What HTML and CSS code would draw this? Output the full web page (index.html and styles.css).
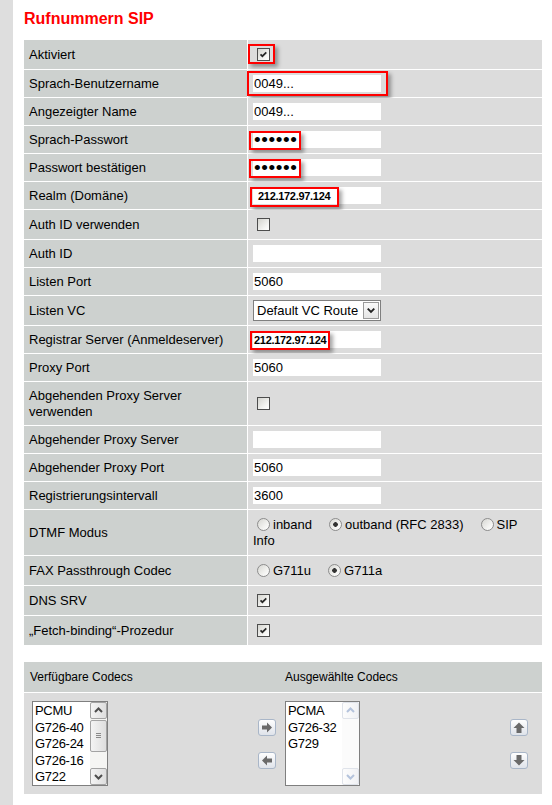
FILE: index.html
```html
<!DOCTYPE html>
<html lang="de">
<head>
  <meta charset="UTF-8">
  <meta name="viewport" content="width=device-width, initial-scale=1.0">
  <title>Rufnummern SIP</title>
  <link rel="stylesheet" href="styles.css">
</head>
<body>
  <div class="page">
    <div class="side"></div>
    <div class="main">
      <h1>Rufnummern SIP</h1>

      <table class="settings">
        <tr class="tall">
          <td class="label">Aktiviert</td>
          <td class="val">
            <span class="cb"><svg viewBox="0 0 11 11"><path d="M2.5 5.3 L4.4 7.2 L8.3 3.3"/></svg></span>
            <span class="mark mark-check"></span>
          </td>
        </tr>
        <tr>
          <td class="label">Sprach-Benutzername</td>
          <td class="val"><input class="txt" type="text" value="0049..."><span class="mark mark-user"></span></td>
        </tr>
        <tr>
          <td class="label">Angezeigter Name</td>
          <td class="val"><input class="txt" type="text" value="0049..."></td>
        </tr>
        <tr>
          <td class="label">Sprach-Passwort</td>
          <td class="val"><input class="txt pw" type="password" value="secret"><span class="mark mark-pass"></span></td>
        </tr>
        <tr>
          <td class="label">Passwort bestätigen</td>
          <td class="val"><input class="txt pw" type="password" value="secret"><span class="mark mark-pass"></span></td>
        </tr>
        <tr>
          <td class="label">Realm (Domäne)</td>
          <td class="val"><input class="txt ip realm" type="text" value="212.172.97.124"><span class="mark mark-realm"></span></td>
        </tr>
        <tr class="tall">
          <td class="label">Auth ID verwenden</td>
          <td class="val"><span class="cb"></span></td>
        </tr>
        <tr>
          <td class="label">Auth ID</td>
          <td class="val"><input class="txt" type="text" value=""></td>
        </tr>
        <tr>
          <td class="label">Listen Port</td>
          <td class="val"><input class="txt" type="text" value="5060"></td>
        </tr>
        <tr class="tall">
          <td class="label">Listen VC</td>
          <td class="val">
            <span class="select">
              <span class="select-text">Default VC Route</span>
              <span class="select-btn"><svg viewBox="0 0 14 16"><path d="M3.5 6 L7 9.5 L10.5 6"/></svg></span>
            </span>
          </td>
        </tr>
        <tr>
          <td class="label">Registrar Server (Anmeldeserver)</td>
          <td class="val"><input class="txt ip" type="text" value="212.172.97.124"><span class="mark mark-reg"></span></td>
        </tr>
        <tr>
          <td class="label">Proxy Port</td>
          <td class="val"><input class="txt" type="text" value="5060"></td>
        </tr>
        <tr class="double">
          <td class="label">Abgehenden Proxy Server verwenden</td>
          <td class="val"><span class="cb"></span></td>
        </tr>
        <tr>
          <td class="label">Abgehender Proxy Server</td>
          <td class="val"><input class="txt" type="text" value=""></td>
        </tr>
        <tr>
          <td class="label">Abgehender Proxy Port</td>
          <td class="val"><input class="txt" type="text" value="5060"></td>
        </tr>
        <tr>
          <td class="label">Registrierungsintervall</td>
          <td class="val"><input class="txt" type="text" value="3600"></td>
        </tr>
        <tr class="double wide">
          <td class="label">DTMF Modus</td>
          <td class="val radios"><span class="opt"><span class="rb"></span>inband</span><span class="opt"><span class="rb on"></span>outband (RFC 2833)</span><span class="opt"><span class="rb"></span>SIP</span> Info</td>
        </tr>
        <tr class="tall">
          <td class="label">FAX Passthrough Codec</td>
          <td class="val radios"><span class="opt"><span class="rb"></span>G711u</span><span class="opt"><span class="rb on"></span>G711a</span></td>
        </tr>
        <tr class="tall">
          <td class="label">DNS SRV</td>
          <td class="val"><span class="cb"><svg viewBox="0 0 11 11"><path d="M2.5 5.3 L4.4 7.2 L8.3 3.3"/></svg></span></td>
        </tr>
        <tr class="tall">
          <td class="label">„Fetch-binding“-Prozedur</td>
          <td class="val"><span class="cb"><svg viewBox="0 0 11 11"><path d="M2.5 5.3 L4.4 7.2 L8.3 3.3"/></svg></span></td>
        </tr>
      </table>

      <div class="codecs">
        <div class="codecs-head">
          <span class="col-a">Verfügbare Codecs</span>
          <span>Ausgewählte Codecs</span>
        </div>
        <div class="codecs-body">
          <div class="list list-a">
            <div class="list-items">
              <div>PCMU</div>
              <div>G726-40</div>
              <div>G726-24</div>
              <div>G726-16</div>
              <div>G722</div>
            </div>
            <div class="sb">
              <span class="sb-btn"><svg viewBox="0 0 15 15"><path d="M4 9 L7.5 5.5 L11 9"/></svg></span>
              <span class="sb-thumb"><svg viewBox="0 0 15 30"><path d="M5 12.5 H10 M5 14.5 H10 M5 16.5 H10"/></svg></span>
              <span class="sb-track"></span>
              <span class="sb-btn"><svg viewBox="0 0 15 15"><path d="M4 6 L7.5 9.5 L11 6"/></svg></span>
            </div>
          </div>

          <div class="movers">
            <span class="btn"><svg viewBox="0 0 16 15"><path d="M3 5.5 H8 V2.5 L13 7.5 L8 12.5 V9.5 H3 Z"/></svg></span>
            <span class="btn"><svg viewBox="0 0 16 15"><path d="M13 5.5 H8 V2.5 L3 7.5 L8 12.5 V9.5 H13 Z"/></svg></span>
          </div>

          <div class="list list-b">
            <div class="list-items">
              <div>PCMA</div>
              <div>G726-32</div>
              <div>G729</div>
            </div>
            <div class="sb off">
              <span class="sb-btn"><svg viewBox="0 0 15 15"><path d="M4 9 L7.5 5.5 L11 9"/></svg></span>
              <span class="sb-track"></span>
              <span class="sb-btn"><svg viewBox="0 0 15 15"><path d="M4 6 L7.5 9.5 L11 6"/></svg></span>
            </div>
          </div>

          <div class="movers">
            <span class="btn"><svg viewBox="0 0 16 15"><path d="M5.5 13 V8 H2.5 L8 2.5 L13.5 8 H10.5 V13 Z"/></svg></span>
            <span class="btn"><svg viewBox="0 0 16 15"><path d="M5.5 2 V7 H2.5 L8 12.5 L13.5 7 H10.5 V2 Z"/></svg></span>
          </div>
        </div>
      </div>
    </div>
  </div>
</body>
</html>
```

FILE: styles.css
```css
/* Reset */
* {
  box-sizing: border-box;
  margin: 0;
  padding: 0;
}

body {
  font-family: "Liberation Sans", Arial, sans-serif;
  font-size: 13px;
  color: #000;
  background-color: #fff;
}

.page {
  display: flex;
  min-height: 100vh;
}

/* grey strip on the left edge */
.side {
  flex: none;
  width: 13px;
  background-color: #dedede;
}

.main {
  margin-left: 11px;
  width: 518px;
}

h1 {
  height: 40px;
  padding-top: 10px;
  font-size: 16px;
  line-height: 18px;
  font-weight: bold;
  color: #f00;
}

/* Settings table */
.settings {
  width: 518px;
  border-collapse: separate;
  border-spacing: 0;
}

.settings td {
  height: 28px;
  border-bottom: 1px solid #fff;
  vertical-align: middle;
  line-height: 16px;
}

.settings tr.tall td {
  height: 30px;
}

.settings tr.double td {
  height: 44px;
}

.settings tr.wide td {
  height: 46px;
}

.label {
  width: 224px;
  padding: 0 14px 0 5px;
  background-color: #cdd1cf;
  border-right: 1px solid #fff;
}

.val {
  position: relative;
  padding: 0 10px 0 5px;
  background-color: #dcdcdc;
}

.txt {
  display: block;
  width: 128px;
  height: 17px;
  border: none;
  padding: 0 1px;
  background: #fff;
  font-family: "Liberation Sans", Arial, sans-serif;
  font-size: 13px;
  color: #000;
  outline: none;
}

.txt.pw {
  font-size: 19px;
  letter-spacing: 0.6px;
  line-height: 17px;
}

.txt.ip {
  font-size: 11px;
  font-weight: bold;
  letter-spacing: -0.3px;
}

.txt.realm {
  padding-left: 5px;
}

/* checkbox */
.cb {
  display: block;
  width: 13px;
  height: 13px;
  margin-left: 4px;
  border: 1px solid #4d4d4d;
  background: linear-gradient(135deg, #d4d4cf 0%, #f6f6f4 70%, #fff 100%);
}

.cb svg {
  display: block;
  width: 11px;
  height: 11px;
  fill: none;
  stroke: #262626;
  stroke-width: 1.7;
}

/* radio buttons */
.radios {
  line-height: 17px;
  padding-top: 1px;
}

.opt {
  white-space: nowrap;
}

.opt + .opt {
  margin-left: 13px;
}

.rb {
  display: inline-block;
  width: 13px;
  height: 13px;
  margin: 0 3px 0 4px;
  vertical-align: -2px;
  border: 1px solid #8c8c8c;
  border-radius: 50%;
  background: linear-gradient(135deg, #d6d6d2 0%, #f4f4f2 65%, #fff 100%);
}

.rb.on {
  background:
    radial-gradient(circle, #333 0, #333 2px, transparent 2.6px),
    linear-gradient(135deg, #d6d6d2 0%, #f4f4f2 65%, #fff 100%);
}

/* select box */
.select {
  display: flex;
  align-items: center;
  width: 128px;
  height: 21px;
  border: 1px solid #7f7f7f;
  background-color: #fff;
}

.select-text {
  flex: 1;
  padding-left: 3px;
  white-space: nowrap;
}

.select-btn {
  width: 16px;
  height: 17px;
  margin-right: 1px;
  border: 1px solid #9a9a9a;
  background: linear-gradient(#fafafa, #e4e4e4);
}

.select-btn svg {
  display: block;
  width: 14px;
  height: 15px;
  fill: none;
  stroke: #222;
  stroke-width: 2;
}

/* red annotation frames */
.mark {
  position: absolute;
  border: 2px solid #f00;
  box-shadow: 3px 3px 4px rgba(0, 0, 0, 0.35);
  pointer-events: none;
}

.mark-check {
  left: 0;
  top: 4px;
  width: 27px;
  height: 20px;
}

.mark-user {
  left: -1px;
  top: 1px;
  width: 141px;
  height: 25px;
}

.mark-pass {
  left: 1px;
  top: 5px;
  width: 52px;
  height: 19px;
}

.mark-realm {
  left: 2px;
  top: 5px;
  width: 89px;
  height: 20px;
}

.mark-reg {
  left: 2px;
  top: 5px;
  width: 80px;
  height: 19px;
}

/* Codec lists */
.codecs {
  margin-top: 16px;
  width: 518px;
}

.codecs-head {
  display: flex;
  height: 31px;
  padding-left: 6px;
  line-height: 30px;
  font-size: 12px;
  background-color: #cdd1cf;
  border-bottom: 1px solid #fff;
}

.col-a {
  width: 255px;
}

.codecs-body {
  display: flex;
  align-items: flex-start;
  height: 101px;
  padding: 8px 0 0 8px;
  background-color: #dcdcdc;
}

.list {
  display: flex;
  height: 85px;
  border: 1px solid #7f7f7f;
  background-color: #fff;
}

.list-a {
  width: 76px;
}

.list-b {
  width: 75px;
  margin-left: 9px;
}

.list-items {
  flex: 1;
  min-width: 0;
  overflow: hidden;
  padding: 1px 2px;
  line-height: 16.5px;
  white-space: nowrap;
  letter-spacing: -0.3px;
}

.sb {
  display: flex;
  flex-direction: column;
  flex: none;
  width: 17px;
  background-color: #f5f5f3;
}

.sb-btn,
.sb-thumb {
  display: block;
  height: 17px;
  border: 1px solid #a3a3a3;
  border-radius: 2px;
  background: linear-gradient(90deg, #f4f4f4, #dedede);
}

.sb-thumb {
  height: 32px;
  margin-top: 1px;
}

.sb-track {
  flex: 1;
}

.sb svg {
  display: block;
  width: 15px;
  height: 15px;
  fill: none;
  stroke: #4d4d4d;
  stroke-width: 2;
}

.sb-thumb svg {
  height: 30px;
  stroke: #8a8a8a;
  stroke-width: 1;
}

.sb.off {
  background-color: #fbfbfb;
}

.sb.off .sb-btn {
  border-color: #dfe3ea;
  background: linear-gradient(90deg, #fdfdfd, #f0f1f4);
}

.sb.off svg {
  stroke: #b4c3dc;
}

/* move buttons */
.movers {
  display: flex;
  flex-direction: column;
  gap: 16px;
  margin-left: 150px;
  padding-top: 18px;
}

.btn {
  display: block;
  width: 18px;
  height: 17px;
  border: 1px solid #a9b6c8;
  border-radius: 3px;
  background: linear-gradient(#fefefe, #dfe3ea);
}

.btn svg {
  display: block;
  width: 16px;
  height: 15px;
  fill: #6a6a6a;
}
```
